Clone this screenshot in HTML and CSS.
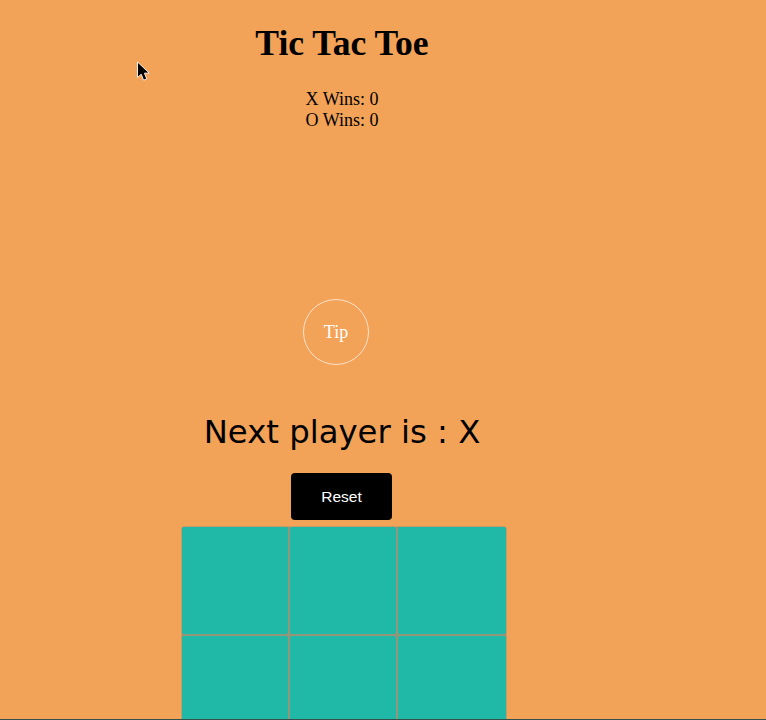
FILE: index.html
```html
<!DOCTYPE html>
<html lang="en">
<head>
  <meta charset="UTF-8">
  <title>Tic Tac Toe</title>
  <link rel="stylesheet" href="styles.css">
</head>
<body>
  <svg class="cursor" width="15" height="21" viewBox="0 0 15 21">
    <path d="M1.5 1 L1.5 16.5 L5.2 13.2 L7.6 19.2 L10.8 17.9 L8.4 12.2 L13.2 12 Z" fill="#000" stroke="#fff" stroke-width="0.9"/>
  </svg>
  <div class="container">
    <h1 class="title">Tic Tac Toe</h1>
    <div class="score">
      <div>X Wins: 0</div>
      <div>O Wins: 0</div>
    </div>
    <div class="tip-row">
      <div class="tip">Tip</div>
    </div>
    <div class="status">Next player is : X</div>
    <button class="reset">Reset</button>
    <div class="board">
      <div class="cell"></div>
      <div class="cell"></div>
      <div class="cell"></div>
      <div class="cell"></div>
      <div class="cell"></div>
      <div class="cell"></div>
      <div class="cell"></div>
      <div class="cell"></div>
      <div class="cell"></div>
    </div>
  </div>
  <div class="bottom-line"></div>
</body>
</html>
```

FILE: styles.css
```css
html, body {
  height: 720px;
  overflow: hidden;
}
body {
  margin: 0;
  background-color: #f3a358;
  color: black;
  font-family: "Liberation Serif", serif;
}
.container {
  width: 684px;
  height: 720px;
  overflow: hidden;
  display: flex;
  flex-direction: column;
  align-items: center;
}
.container > * {
  flex-shrink: 0;
}
.title {
  margin: 22px 0 0;
  font-size: 35.6px;
  line-height: 42px;
  font-weight: bold;
}
.score {
  margin-top: 25px;
  font-size: 18px;
  line-height: 21px;
  text-align: center;
}
.tip-row {
  margin-top: 168px;
  width: 100%;
  display: flex;
  justify-content: center;
  padding-right: 12px;
  box-sizing: border-box;
}
.tip {
  width: 64px;
  height: 64px;
  border: 1px solid #fbe3cc;
  border-radius: 50%;
  color: white;
  font-size: 18px;
  display: flex;
  align-items: center;
  justify-content: center;
}
.status {
  margin-top: 45px;
  font-family: "DejaVu Sans", sans-serif;
  font-size: 32.3px;
  line-height: 44px;
}
.reset {
  margin-top: 19px;
  margin-right: 1px;
  width: 101px;
  height: 47px;
  background: black;
  color: white;
  font-family: "Liberation Sans", sans-serif;
  font-size: 15.5px;
  border: none;
  border-radius: 4px;
}
.board {
  margin-top: 7px;
  margin-left: 3.5px;
  display: grid;
  grid-template-columns: 106px 106px 108.5px;
  grid-auto-rows: 107px;
  gap: 2px;
  background: #94967a;
  box-shadow: 0 0 0 1px rgba(148, 150, 122, 0.5);
  border-radius: 3px;
}
.cell {
  background: #20b8a6;
  border-radius: 2px;
}
.cursor {
  position: absolute;
  left: 136px;
  top: 61px;
}
.bottom-line {
  position: absolute;
  left: 0;
  right: 0;
  top: 719px;
  height: 1px;
  background: #33504a;
}
```
